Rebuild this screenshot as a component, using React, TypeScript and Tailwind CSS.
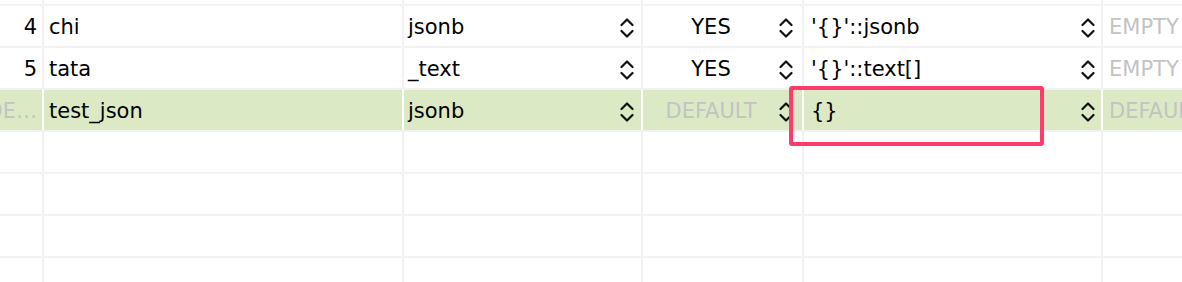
import type { ReactNode } from "react";

type Row = {
  num: ReactNode;
  name: string;
  type: string;
  nullable: string;
  defaultValue: string;
  comment: string;
  isNew?: boolean;
};

const rows: Row[] = [
  { num: "4", name: "chi", type: "jsonb", nullable: "YES", defaultValue: "'{}'::jsonb", comment: "EMPTY" },
  { num: "5", name: "tata", type: "_text", nullable: "YES", defaultValue: "'{}'::text[]", comment: "EMPTY" },
  { num: "DE…", name: "test_json", type: "jsonb", nullable: "DEFAULT", defaultValue: "{}", comment: "DEFAULT", isNew: true },
];

function UpDown() {
  return (
    <svg viewBox="0 0 14 20" fill="none" className="h-[20px] w-[14px] shrink-0">
      <path d="M1.5 7 L7 1.5 L12.5 7" stroke="#111" strokeWidth="2.2" strokeLinecap="round" strokeLinejoin="round" />
      <path d="M1.5 13 L7 18.5 L12.5 13" stroke="#111" strokeWidth="2.2" strokeLinecap="round" strokeLinejoin="round" />
    </svg>
  );
}

function Cells({ row }: { row?: Row }) {
  const sep = row?.isNew ? "border-white" : "border-[#f2f2f2]";
  const muted = "text-[#c3c3c3]";
  return (
    <>
      <div className={`flex w-[44px] shrink-0 justify-end overflow-hidden whitespace-nowrap border-r-2 pr-[5px] pt-[3px] ${sep} ${row?.isNew ? muted : ""}`}>
        {row?.num}
      </div>
      <div className={`flex w-[360px] shrink-0 items-center border-r-2 pl-[5px] pt-[3px] ${sep}`}>{row?.name}</div>
      <div className={`flex w-[239px] shrink-0 items-center justify-between border-r-2 pl-[4px] pr-[7px] pt-[3px] ${sep}`}>
        <span>{row?.type}</span>
        {row && <UpDown />}
      </div>
      <div className={`flex w-[161px] shrink-0 items-center border-r-2 pr-[9px] pt-[3px] ${sep}`}>
        <span className={`flex-1 text-center ${row?.isNew ? muted : ""}`}>{row?.nullable}</span>
        {row && <UpDown />}
      </div>
      <div className={`flex w-[299px] shrink-0 items-center justify-between border-r-2 pl-[7px] pr-[6px] pt-[3px] ${sep}`}>
        <span>{row?.defaultValue}</span>
        {row && <UpDown />}
      </div>
      <div className={`flex min-w-0 flex-1 items-center overflow-hidden whitespace-nowrap pl-[6px] pt-[3px] ${muted}`}>
        {row?.comment}
      </div>
    </>
  );
}

export default function App() {
  return (
    <div
      className="relative h-[282px] w-[1182px] overflow-hidden bg-white text-[21px] text-black"
      style={{ fontFamily: '"DejaVu Sans", Verdana, sans-serif' }}
    >
      <div className="flex h-[6px] border-b-2 border-[#f2f2f2]">
        <Cells />
      </div>
      {rows.map((row, i) => (
        <div
          key={i}
          className={`flex h-[42px] items-stretch border-b-2 border-[#f2f2f2] leading-[37px] ${row.isNew ? "bg-[#dbeac4]" : ""}`}
        >
          <Cells row={row} />
        </div>
      ))}
      {[0, 1, 2, 3].map((i) => (
        <div key={i} className="flex h-[42px] border-b-2 border-[#f2f2f2]">
          <Cells />
        </div>
      ))}
      <div className="pointer-events-none absolute left-[789px] top-[86px] h-[60px] w-[255px] rounded-[3px] border-4 border-[#ff3b6b]" />
    </div>
  );
}
